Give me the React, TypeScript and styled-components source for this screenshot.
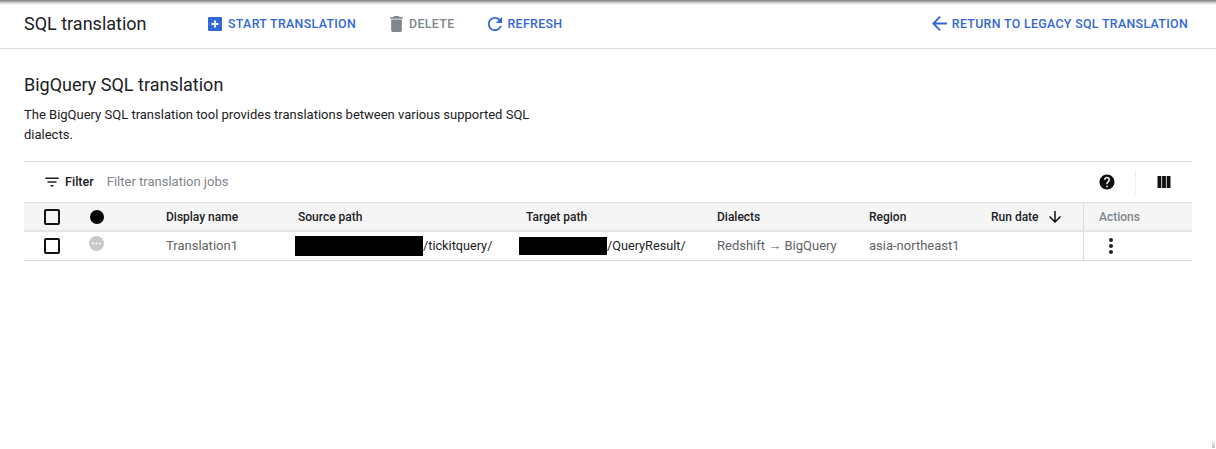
import * as React from 'react'
import styled, { createGlobalStyle } from 'styled-components'

const GlobalStyle = createGlobalStyle`
  html, body {
    margin: 0;
    padding: 0;
    background: #fff;
    font-family: Roboto, "Liberation Sans", sans-serif;
    color: #202124;
  }
`

const Page = styled.div`
  width: 1216px;
  height: 449px;
  overflow: hidden;
  background: #fff;
`

const TopShadow = styled.div`
  height: 5px;
  background: linear-gradient(#7d7d7d, #a8a8a8 30%, #e0e0e0 65%, #fff);
`

const Toolbar = styled.header`
  display: flex;
  align-items: center;
  height: 37px;
  padding: 0 28px 6px 24px;
  border-bottom: 1px solid #dadce0;
`

const PageTitle = styled.h1`
  margin: 0 61px 0 0;
  width: 122px;
  font-size: 18px;
  font-weight: 400;
  color: #202124;
  white-space: nowrap;
`

const ToolButton = styled.button<{ $muted?: boolean; $push?: boolean }>`
  display: flex;
  align-items: center;
  gap: 5px;
  margin-left: ${p => (p.$push ? 'auto' : '0')};
  margin-right: ${p => (p.$push ? '0' : '33px')};
  padding: 0;
  border: 0;
  background: none;
  font: 500 12.4px Roboto, sans-serif;
  letter-spacing: 0.32px;
  color: ${p => (p.$muted ? '#80868b' : '#3367d6')};
  white-space: nowrap;

  svg {
    display: block;
    fill: currentColor;
  }
`

const Content = styled.main`
  padding: 25px 24px 0;
`

const SectionTitle = styled.h2`
  margin: 0;
  font-size: 18px;
  line-height: 22px;
  font-weight: 400;
  color: #202124;
`

const Description = styled.p`
  margin: 9px 0 16px;
  width: 530px;
  font-size: 13px;
  line-height: 20px;
  color: #202124;
`

const FilterBar = styled.div`
  display: flex;
  align-items: center;
  height: 40px;
  padding-left: 19px;
  border-top: 1px solid #dadce0;
`

const FilterLabel = styled.span`
  margin: 0 0 2px 4px;
  font-size: 12.6px;
  font-weight: 500;
  color: #202124;
`

const FilterHint = styled.span`
  margin: 0 0 2px 13px;
  font-size: 13px;
  color: #80868b;
`

const FilterTools = styled.div`
  display: flex;
  align-items: center;
  margin-left: auto;
  padding-right: 16px;

  svg {
    display: block;
  }
`

const ToolDivider = styled.span`
  width: 1px;
  height: 24px;
  margin: 0 16px 0 19px;
  background: #eceef0;
`

const Row = styled.div<{ $head?: boolean }>`
  display: grid;
  grid-template-columns: 142px 132px 228px 191px 152px 122px 92px 109px;
  height: ${p => (p.$head ? '27px' : '28px')};
  align-items: center;
  border-top: ${p => (p.$head ? '1px solid #e0e0e0' : '0')};
  border-bottom: ${p => (p.$head ? '2px solid #e6e6e6' : '1px solid #dadce0')};
  background: ${p => (p.$head ? '#f5f5f5' : '#fff')};
  font-size: ${p => (p.$head ? '12px' : '13px')};
  font-weight: ${p => (p.$head ? 500 : 400)};
  color: ${p => (p.$head ? '#202124' : '#5f6368')};
`

const LeadCell = styled.div`
  display: flex;
  align-items: center;
  padding-left: 20px;
`

const Check = styled.span`
  box-sizing: border-box;
  width: 16px;
  height: 16px;
  border: 2px solid #111;
  border-radius: 2px;
`

const StatusDot = styled.span`
  width: 14px;
  height: 14px;
  margin-left: 30px;
  border-radius: 50%;
  background: #000;
`

const PendingDot = styled.svg`
  display: block;
  width: 15px;
  height: 15px;
  margin: -6px 0 0 29px;
`

const Cell = styled.div`
  display: flex;
  align-items: center;
  white-space: nowrap;
`

const BodyText = styled.span`
  margin-bottom: 2px;
`

const PathCell = styled(Cell)`
  font-size: 12.7px;
  color: #202124;
`

const Redacted = styled.span<{ $width: number; $height: number; $offset: number }>`
  display: block;
  width: ${p => p.$width}px;
  height: ${p => p.$height}px;
  margin-left: ${p => p.$offset}px;
  background: #000;
`

const SortArrow = styled.svg`
  display: block;
  width: 18px;
  height: 18px;
  margin-left: 7px;
`

const ActionsCell = styled(Cell)`
  align-self: stretch;
  padding-left: 15px;
  border-left: 1px solid #dadce0;
`

const ActionsLabel = styled.span`
  color: #80868b;
`

const MoreIcon = styled.svg`
  display: block;
  width: 24px;
  height: 24px;
  fill: #202124;
`

const ResizeMark = styled.div`
  position: fixed;
  right: 1px;
  bottom: 1px;
  width: 3px;
  height: 7px;
  background: linear-gradient(to top, #c4c4c4, #f2f2f2);
`

export default function App() {
  return (
    <Page>
      <GlobalStyle />
      <TopShadow />
      <Toolbar>
        <PageTitle>SQL translation</PageTitle>
        <ToolButton>
          <svg width="16" height="16" viewBox="0 0 16 16">
            <path d="M2 1h12a1 1 0 0 1 1 1v12a1 1 0 0 1-1 1H2a1 1 0 0 1-1-1V2a1 1 0 0 1 1-1zm5 3.5V7H4.500v2H7v2.500h2V9h2.500V7H9V4.500H7z" fillRule="evenodd" />
          </svg>
          START TRANSLATION
        </ToolButton>
        <ToolButton $muted>
          <svg width="15" height="16" viewBox="4 3 16 18">
            <path d="M6 19c0 1.100.9 2 2 2h8c1.100 0 2-.9 2-2V7H6v12zM19 4h-3.500l-1-1h-5l-1 1H5v2h14V4z" />
          </svg>
          DELETE
        </ToolButton>
        <ToolButton>
          <svg width="15" height="15" viewBox="3 3 17 17">
            <path d="M17.650 6.350A7.958 7.958 0 0 0 12 4c-4.420 0-7.990 3.580-7.990 8s3.570 8 7.990 8c3.730 0 6.840-2.550 7.730-6h-2.080A5.990 5.990 0 0 1 12 18c-3.310 0-6-2.690-6-6s2.690-6 6-6c1.660 0 3.140.69 4.220 1.780L13 11h7V4l-2.350 2.350z" />
          </svg>
          REFRESH
        </ToolButton>
        <ToolButton $push>
          <svg width="15" height="15" viewBox="4 4 16 16">
            <path d="M20 11H7.830l5.590-5.590L12 4l-8 8 8 8 1.410-1.410L7.830 13H20v-2z" />
          </svg>
          RETURN TO LEGACY SQL TRANSLATION
        </ToolButton>
      </Toolbar>
      <Content>
        <SectionTitle>BigQuery SQL translation</SectionTitle>
        <Description>
          The BigQuery SQL translation tool provides translations between various supported SQL
          dialects.
        </Description>
        <FilterBar>
          <svg width="18" height="18" viewBox="0 0 24 24" fill="#202124">
            <path d="M10 18h4v-2h-4v2zM3 6v2h18V6H3zm3 7h12v-2H6v2z" />
          </svg>
          <FilterLabel>Filter</FilterLabel>
          <FilterHint>Filter translation jobs</FilterHint>
          <FilterTools>
            <svg width="18" height="18" viewBox="0 0 24 24" fill="#111">
              <path d="M12 2C6.480 2 2 6.480 2 12s4.480 10 10 10 10-4.480 10-10S17.520 2 12 2zm1 17h-2v-2h2v2zm2.070-7.750l-.9.920C13.450 12.900 13 13.500 13 15h-2v-.5c0-1.100.45-2.100 1.170-2.830l1.240-1.260c.37-.36.590-.86.590-1.410 0-1.100-.9-2-2-2s-2 .9-2 2H8c0-2.210 1.790-4 4-4s4 1.790 4 4c0 .88-.36 1.680-.93 2.250z" />
            </svg>
            <ToolDivider />
            <svg width="24" height="24" viewBox="0 0 24 24" fill="#111">
              <path d="M5.500 6h3.800v12H5.500zM10.100 6h3.800v12h-3.800zM14.700 6h3.800v12h-3.800z" />
            </svg>
          </FilterTools>
        </FilterBar>
        <Row $head>
          <LeadCell>
            <Check />
            <StatusDot />
          </LeadCell>
          <Cell>Display name</Cell>
          <Cell>Source path</Cell>
          <Cell>Target path</Cell>
          <Cell>Dialects</Cell>
          <Cell>Region</Cell>
          <Cell>
            Run date
            <SortArrow viewBox="0 0 24 24" fill="#111">
              <path d="M20 12l-1.410-1.410L13 16.170V4h-2v12.170l-5.580-5.590L4 12l8 8 8-8z" />
            </SortArrow>
          </Cell>
          <ActionsCell>
            <ActionsLabel>Actions</ActionsLabel>
          </ActionsCell>
        </Row>
        <Row>
          <LeadCell>
            <Check />
            <PendingDot viewBox="0 0 15 15">
              <circle cx="7.500" cy="7.500" r="7.500" fill="#c8c8c8" />
              <circle cx="4" cy="7.500" r="1.100" fill="#fff" />
              <circle cx="7.500" cy="7.500" r="1.100" fill="#fff" />
              <circle cx="11" cy="7.500" r="1.100" fill="#fff" />
            </PendingDot>
          </LeadCell>
          <Cell><BodyText>Translation1</BodyText></Cell>
          <PathCell>
            <Redacted $width={128} $height={20} $offset={-3} />
            <BodyText>/tickitquery/</BodyText>
          </PathCell>
          <PathCell>
            <Redacted $width={88} $height={18} $offset={-7} />
            <BodyText>/QueryResult/</BodyText>
          </PathCell>
          <Cell><BodyText>Redshift → BigQuery</BodyText></Cell>
          <Cell><BodyText>asia-northeast1</BodyText></Cell>
          <Cell />
          <ActionsCell>
            <MoreIcon viewBox="0 0 24 24">
              <path d="M12 8c1.100 0 2-.9 2-2s-.9-2-2-2-2 .9-2 2 .9 2 2 2zm0 2c-1.100 0-2 .9-2 2s.9 2 2 2 2-.9 2-2-.9-2-2-2zm0 6c-1.100 0-2 .9-2 2s.9 2 2 2 2-.9 2-2-.9-2-2-2z" />
            </MoreIcon>
          </ActionsCell>
        </Row>
      </Content>
      <ResizeMark />
    </Page>
  )
}
